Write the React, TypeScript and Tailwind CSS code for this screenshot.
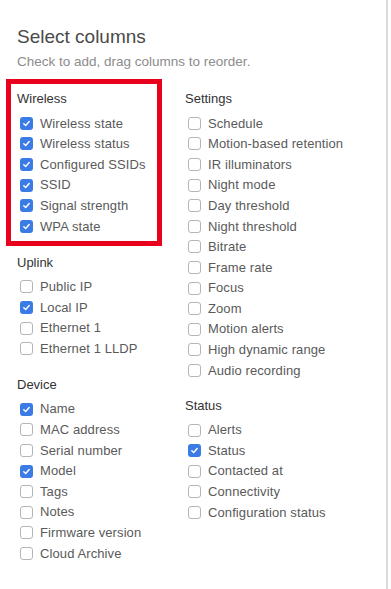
import React from "react";

type Item = { label: string; checked?: boolean };
type Section = { title: string; items: Item[]; boxed?: boolean; gap?: string };

const left: Section[] = [
  {
    title: "Wireless",
    boxed: true,
    items: [
      { label: "Wireless state", checked: true },
      { label: "Wireless status", checked: true },
      { label: "Configured SSIDs", checked: true },
      { label: "SSID", checked: true },
      { label: "Signal strength", checked: true },
      { label: "WPA state", checked: true },
    ],
  },
  {
    title: "Uplink",
    gap: "mt-4",
    items: [
      { label: "Public IP" },
      { label: "Local IP", checked: true },
      { label: "Ethernet 1" },
      { label: "Ethernet 1 LLDP" },
    ],
  },
  {
    title: "Device",
    gap: "mt-4",
    items: [
      { label: "Name", checked: true },
      { label: "MAC address" },
      { label: "Serial number" },
      { label: "Model", checked: true },
      { label: "Tags" },
      { label: "Notes" },
      { label: "Firmware version" },
      { label: "Cloud Archive" },
    ],
  },
];

const right: Section[] = [
  {
    title: "Settings",
    items: [
      { label: "Schedule" },
      { label: "Motion-based retention" },
      { label: "IR illuminators" },
      { label: "Night mode" },
      { label: "Day threshold" },
      { label: "Night threshold" },
      { label: "Bitrate" },
      { label: "Frame rate" },
      { label: "Focus" },
      { label: "Zoom" },
      { label: "Motion alerts" },
      { label: "High dynamic range" },
      { label: "Audio recording" },
    ],
  },
  {
    title: "Status",
    gap: "mt-[15px]",
    items: [
      { label: "Alerts" },
      { label: "Status", checked: true },
      { label: "Contacted at" },
      { label: "Connectivity" },
      { label: "Configuration status" },
    ],
  },
];

const Box: React.FC<{ checked?: boolean }> = ({ checked }) =>
  checked ? (
    <span className="flex h-[13px] w-[13px] items-center justify-center rounded-[3px] bg-[#3b7be6]">
      <svg width="9" height="9" viewBox="0 0 10 10" fill="none">
        <path d="M2 5.2 4.1 7.3 8 2.8" stroke="#fff" strokeWidth="1.6" strokeLinecap="round" strokeLinejoin="round" />
      </svg>
    </span>
  ) : (
    <span className="h-[13px] w-[13px] rounded-[3px] border border-[#b5b5b5] bg-white" />
  );

const Group: React.FC<{ s: Section }> = ({ s }) => (
  <div className={`relative ${s.gap ?? ""}`}>
    {s.boxed && (
      <div className="absolute -left-[11px] -top-[10px] h-[167px] w-[156px] border-[5px] border-[#e8001c]" />
    )}
    <div className="h-5 text-[13px] leading-5 text-[#333]">{s.title}</div>
    <div className="mt-[4px]">
      {s.items.map((it) => (
        <div key={it.label} className="flex h-[20.6px] items-center pl-[3px]">
          <Box checked={it.checked} />
          <span className="ml-[7px] text-[13px] tracking-[0.1px] text-[#5a5a5a]">{it.label}</span>
        </div>
      ))}
    </div>
  </div>
);

export default function App() {
  return (
    <div className="flex min-h-[589px] w-[391px] bg-white" style={{ fontFamily: '"Liberation Sans", Arial, sans-serif' }}>
      <div className="w-[388px] border-r-2 border-[#dcdcdc] pl-[17px] pt-[25px]">
        <h1 className="h-6 text-[19px] font-normal leading-6 text-[#4a4a4a]">Select columns</h1>
        <p className="mt-1 h-[18px] text-[13.5px] leading-[18px] text-[#8c8c8c]">
          Check to add, drag columns to reorder.
        </p>
        <div className="mt-[18px] grid grid-cols-[168px_1fr]">
          <div>
            {left.map((s) => (
              <Group key={s.title} s={s} />
            ))}
          </div>
          <div>
            {right.map((s) => (
              <Group key={s.title} s={s} />
            ))}
          </div>
        </div>
      </div>
    </div>
  );
}
